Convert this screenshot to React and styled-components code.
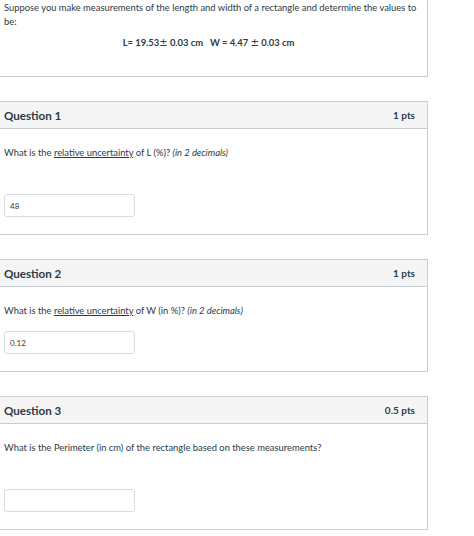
import React from "react";
import styled, { createGlobalStyle } from "styled-components";

const GlobalStyle = createGlobalStyle`
  body {
    margin: 0;
    background: #ffffff;
    font-family: Lato, "Open Sans", sans-serif;
    color: #2d3b45;
  }
`;

const Page = styled.div`
  width: 429px;
  margin-left: -1px;
  display: flex;
  flex-direction: column;
  gap: 24px;
`;

const Card = styled.div`
  border: 1px solid #c7cdd1;
  background: #fff;
`;

const IntroCard = styled(Card)`
  border-top: none;
  padding: 1px 4px 26px 4px;
`;

const Para = styled.p`
  margin: 0;
  font-size: 9.4px;
  line-height: 14px;
`;

const Formula = styled.p`
  margin: 7px 0 0;
  font-size: 9.4px;
  line-height: 14px;
  font-weight: 700;
  text-align: center;
  padding-right: 10px;
  white-space: pre;
`;

const PlusMinus = styled.span`
  font-weight: 400;
  font-family: "DejaVu Sans", sans-serif;
  font-size: 10px;
`;

const Header = styled.div`
  height: 26px;
  background: #f5f5f5;
  border-bottom: 1px solid #c7cdd1;
  display: flex;
  align-items: center;
  justify-content: space-between;
  padding: 0 12px 0 4px;
`;

const Title = styled.span`
  font-size: 11.6px;
  font-weight: 700;
`;

const Points = styled.span`
  font-size: 10px;
  font-weight: 700;
`;

const Body = styled.div`
  padding: 17px 4px 17px 4px;
  display: flex;
  flex-direction: column;
`;

const Underlined = styled.span`
  text-decoration: underline;
`;

const Answer = styled.div`
  margin-top: ${(p) => p.$space}px;
  width: 131px;
  height: 23px;
  box-sizing: border-box;
  border: 1px solid #d8dcdf;
  border-radius: 3px;
  font-size: 8px;
  padding-left: 5px;
  display: flex;
  align-items: center;
  color: #2d3b45;
`;

function Question({ num, pts, space, answer, children }) {
  return (
    <Card>
      <Header>
        <Title>Question {num}</Title>
        <Points>{pts} pts</Points>
      </Header>
      <Body>
        <Para>{children}</Para>
        <Answer $space={space}>{answer}</Answer>
      </Body>
    </Card>
  );
}

export default function App() {
  return (
    <>
      <GlobalStyle />
      <Page>
        <IntroCard>
          <Para>
            Suppose you make measurements of the length and width of a
            rectangle and determine the values to be:
          </Para>
          <Formula>
            L= 19.53<PlusMinus>±</PlusMinus> 0.03 cm{"   "}W = 4.47{" "}
            <PlusMinus>±</PlusMinus> 0.03 cm
          </Formula>
        </IntroCard>
        <Question num={1} pts="1" space={34} answer="48">
          What is the <Underlined>relative uncertainty</Underlined> of L (%)?{" "}
          <i>(in 2 decimals)</i>
        </Question>
        <Question num={2} pts="1" space={13} answer="0.12">
          What is the <Underlined>relative uncertainty</Underlined> of W (in
          %)? <i>(in 2 decimals)</i>
        </Question>
        <Question num={3} pts="0.5" space={34} answer="">
          What is the Perimeter (in cm) of the rectangle based on these
          measurements?
        </Question>
      </Page>
    </>
  );
}
